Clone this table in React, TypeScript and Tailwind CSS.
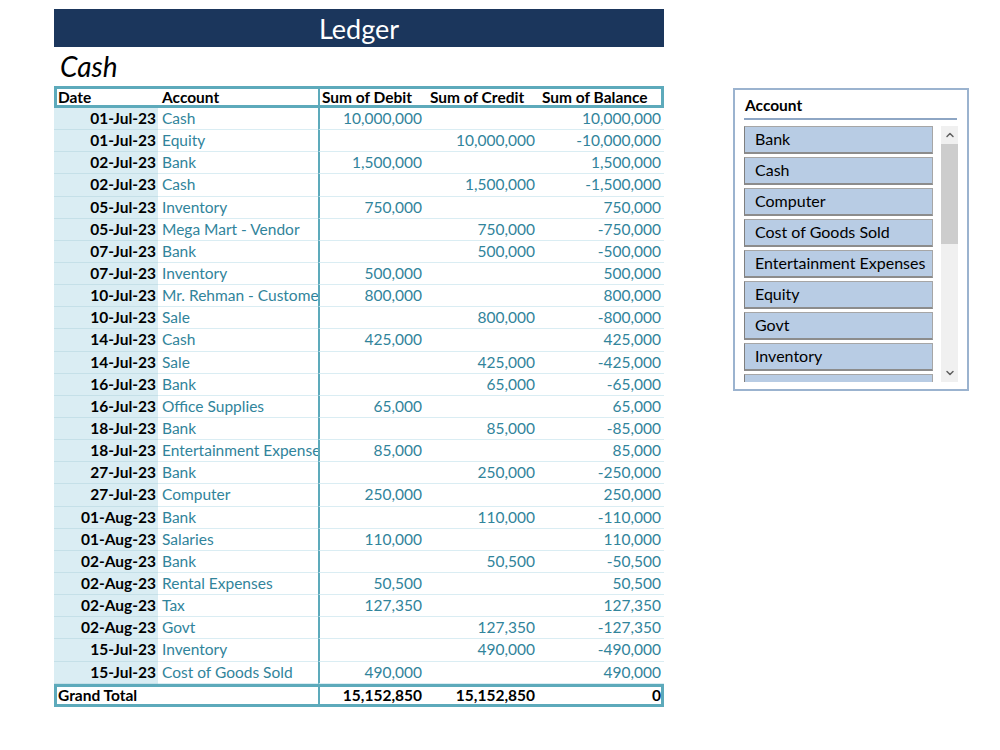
import { ChevronDown, ChevronUp } from 'lucide-react';

type Row = { date: string; account: string; debit?: string; credit?: string; balance: string };

const rows: Row[] = [
  { date: '01-Jul-23', account: 'Cash', debit: '10,000,000', balance: '10,000,000' },
  { date: '01-Jul-23', account: 'Equity', credit: '10,000,000', balance: '-10,000,000' },
  { date: '02-Jul-23', account: 'Bank', debit: '1,500,000', balance: '1,500,000' },
  { date: '02-Jul-23', account: 'Cash', credit: '1,500,000', balance: '-1,500,000' },
  { date: '05-Jul-23', account: 'Inventory', debit: '750,000', balance: '750,000' },
  { date: '05-Jul-23', account: 'Mega Mart - Vendor', credit: '750,000', balance: '-750,000' },
  { date: '07-Jul-23', account: 'Bank', credit: '500,000', balance: '-500,000' },
  { date: '07-Jul-23', account: 'Inventory', debit: '500,000', balance: '500,000' },
  { date: '10-Jul-23', account: 'Mr. Rehman - Customer', debit: '800,000', balance: '800,000' },
  { date: '10-Jul-23', account: 'Sale', credit: '800,000', balance: '-800,000' },
  { date: '14-Jul-23', account: 'Cash', debit: '425,000', balance: '425,000' },
  { date: '14-Jul-23', account: 'Sale', credit: '425,000', balance: '-425,000' },
  { date: '16-Jul-23', account: 'Bank', credit: '65,000', balance: '-65,000' },
  { date: '16-Jul-23', account: 'Office Supplies', debit: '65,000', balance: '65,000' },
  { date: '18-Jul-23', account: 'Bank', credit: '85,000', balance: '-85,000' },
  { date: '18-Jul-23', account: 'Entertainment Expenses', debit: '85,000', balance: '85,000' },
  { date: '27-Jul-23', account: 'Bank', credit: '250,000', balance: '-250,000' },
  { date: '27-Jul-23', account: 'Computer', debit: '250,000', balance: '250,000' },
  { date: '01-Aug-23', account: 'Bank', credit: '110,000', balance: '-110,000' },
  { date: '01-Aug-23', account: 'Salaries', debit: '110,000', balance: '110,000' },
  { date: '02-Aug-23', account: 'Bank', credit: '50,500', balance: '-50,500' },
  { date: '02-Aug-23', account: 'Rental Expenses', debit: '50,500', balance: '50,500' },
  { date: '02-Aug-23', account: 'Tax', debit: '127,350', balance: '127,350' },
  { date: '02-Aug-23', account: 'Govt', credit: '127,350', balance: '-127,350' },
  { date: '15-Jul-23', account: 'Inventory', credit: '490,000', balance: '-490,000' },
  { date: '15-Jul-23', account: 'Cost of Goods Sold', debit: '490,000', balance: '490,000' },
];

const accounts = [
  'Bank',
  'Cash',
  'Computer',
  'Cost of Goods Sold',
  'Entertainment Expenses',
  'Equity',
  'Govt',
  'Inventory',
  'Mega Mart - Vendor',
];

// data rows span the full 610px; boxed rows lose 3px of border on each side
const cols = 'grid grid-cols-[104px_160px_109px_113px_124px]';
const boxedCols = 'grid grid-cols-[101px_160px_109px_113px_121px]';

const Slicer = () => (
  <div className="mt-[79px] ml-[69px] w-[236px] h-[303px] border-2 border-[#9bb3cf] bg-white px-[9px] pt-[5px]">
    <div className="text-[15.5px] font-bold text-black leading-[20px] pl-[1px]">Account</div>
    <div className="mt-[3px] h-[2px] bg-[#8ea6c4] mr-[1px]" />
    <div className="flex flex-row mt-[6px] gap-[8px] h-[256px]">
      <div className="flex flex-col gap-[3px] w-[190px] overflow-hidden">
        {accounts.map((a) => (
          <div
            key={a}
            className="shrink-0 h-[28px] bg-[#b8cce4] border border-[#a6a6a6] border-l-[#7f7f7f] border-b-2 border-b-[#8c8c8c] pl-[10px] text-[16px] leading-[23px] text-black whitespace-nowrap"
          >
            {a}
          </div>
        ))}
      </div>
      <div className="w-[17px] bg-[#f0f0f0] flex flex-col items-center">
        <ChevronUp size={12} strokeWidth={3} className="text-[#606060] mt-[3px]" />
        <div className="w-[17px] h-[100px] bg-[#cdcdcd] mt-[3px]" />
        <div className="flex-1" />
        <ChevronDown size={12} strokeWidth={3} className="text-[#606060] mb-[3px]" />
      </div>
    </div>
  </div>
);

export default function App() {
  return (
    <div className="w-[1000px] h-[750px] bg-white pt-[9px] pl-[54px] flex flex-row font-['Lato','Liberation_Sans',sans-serif]">
      <div className="w-[610px] flex flex-col">
        <div className="h-[38px] bg-[#1b365c] flex items-center justify-center text-white text-[27px] leading-none">
          Ledger
        </div>
        <div className="h-[39px] italic text-[28px] leading-[39px] pl-[6px] text-black">Cash</div>
        <div className={`${boxedCols} h-[22px] border-[3px] border-[#5daabb] text-[15.5px] font-bold text-black leading-[16px] items-center`}>
          <div className="pl-[1px]">Date</div>
          <div className="pl-[4px]">Account</div>
          <div className="pl-[2px] h-full flex items-center border-l-2 border-[#5daabb] whitespace-nowrap">Sum of Debit</div>
          <div className="pl-[3px] whitespace-nowrap">Sum of Credit</div>
          <div className="pl-[2px] whitespace-nowrap">Sum of Balance</div>
        </div>
        {rows.map((r, i) => (
          <div key={i} className={`${cols} h-[22.15px] text-[15.5px] leading-[21px] text-[#31849b]`}>
            <div className="bg-[#daedf3] border-b border-[#c5e0e8] text-right pr-[2px] font-bold text-black">{r.date}</div>
            <div className="pl-[4px] border-b border-[#daedf3] whitespace-nowrap overflow-hidden">{r.account}</div>
            <div className="text-right pr-[5px] border-b border-[#daedf3] border-l-2 border-l-[#5daabb]">{r.debit ?? ''}</div>
            <div className="text-right pr-[5px] border-b border-[#daedf3]">{r.credit ?? ''}</div>
            <div className="text-right pr-[3px] border-b border-[#daedf3]">{r.balance}</div>
          </div>
        ))}
        <div className={`${boxedCols} h-[23px] border-[3px] border-[#5daabb] text-[15.5px] font-bold text-black leading-[17px] items-center`}>
          <div className="pl-[1px] whitespace-nowrap">Grand Total</div>
          <div />
          <div className="h-full flex items-center justify-end pr-[5px] border-l-2 border-[#5daabb]">15,152,850</div>
          <div className="text-right pr-[5px]">15,152,850</div>
          <div className="text-right pr-[0px]">0</div>
        </div>
      </div>
      <Slicer />
    </div>
  );
}
